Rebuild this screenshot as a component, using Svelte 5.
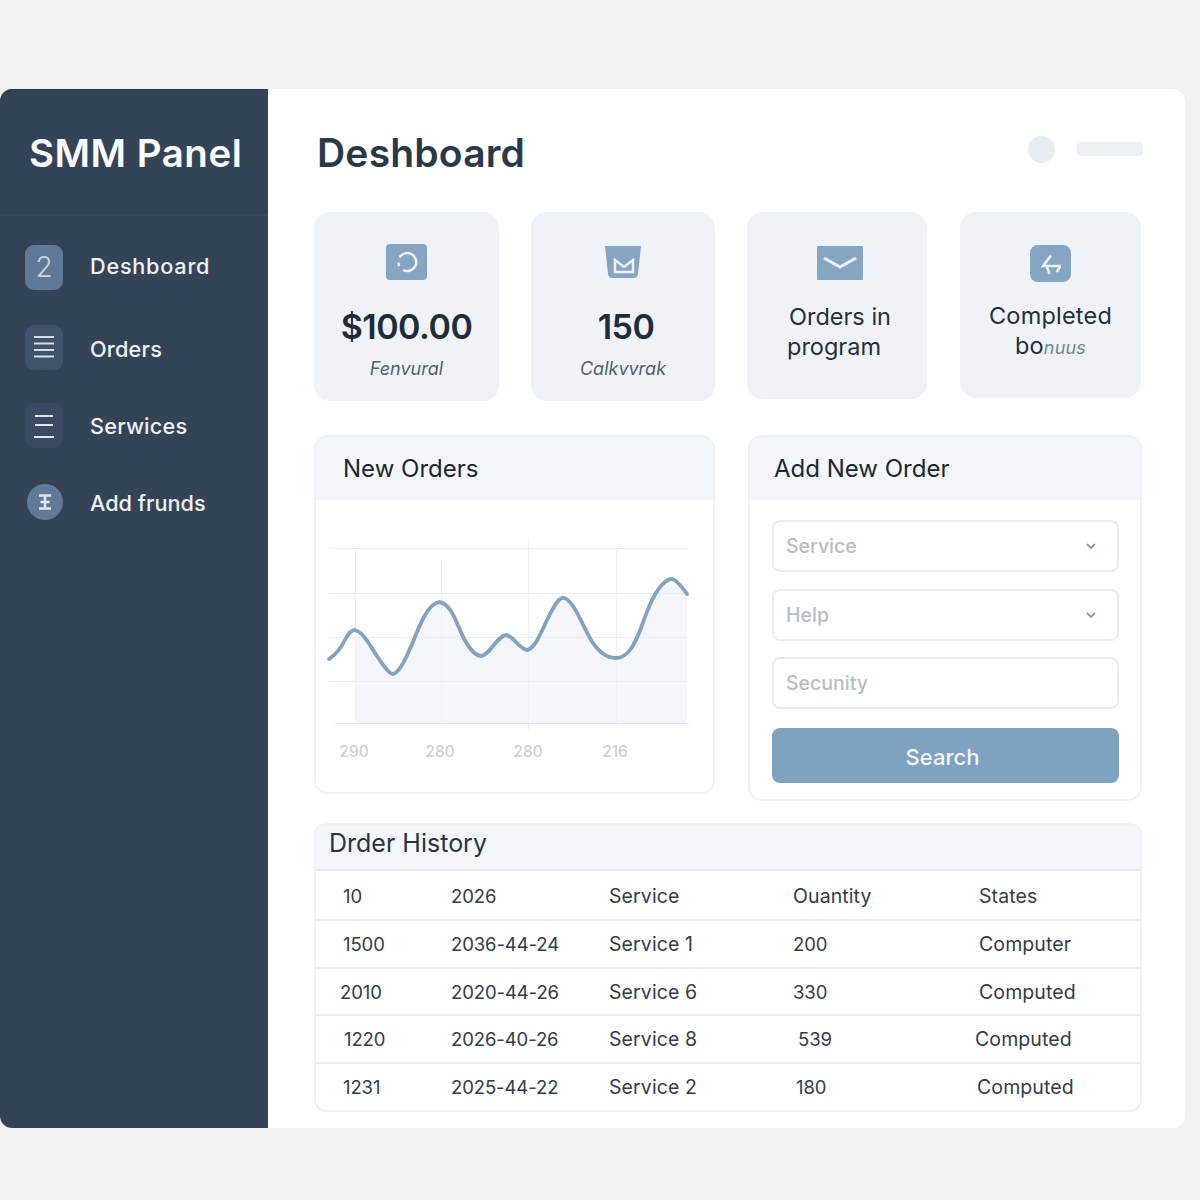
<script>
  const nav = [
    { label: 'Deshboard', kind: 'num' },
    { label: 'Orders', kind: 'list' },
    { label: 'Serwices', kind: 'lines' },
    { label: 'Add frunds', kind: 'fund' }
  ];
  const rows = [
    ['10', '2026', 'Service', 'Ouantity', 'States'],
    ['1500', '2036-44-24', 'Service 1', '200', 'Computer'],
    ['2010', '2020-44-26', 'Service 6', '330', 'Computed'],
    ['1220', '2026-40-26', 'Service 8', '539', 'Computed'],
    ['1231', '2025-44-22', 'Service 2', '180', 'Computed']
  ];
  const shifts = { '2-0': 'back3', '3-0': 'fwd1', '3-3': 'fwd5', '3-4': 'back4', '4-3': 'fwd3', '4-4': 'back2' };
  const cellClass = (text, i, j) => {
    const numeric = /^[\d-]+$/.test(text) ? 'num' : '';
    return `${numeric} ${shifts[`${i}-${j}`] ?? ''}`;
  };
  const line = 'M328 659 C334 655 339 650 344 640 C348 632 351 630 354 630 C362 632 368 644 376 656 C382 665 388 674 392 674 C399 672 405 658 412 642 C419 624 427 604 438 602 C448 603 453 616 459 630 C465 644 473 656 480 656 C489 655 496 636 505 635 C513 636 518 649 526 650 C534 649 540 632 547 618 C553 606 558 597 563 598 C572 600 580 622 590 640 C598 653 606 658 615 658 C627 658 634 644 640 628 C647 608 654 590 664 582 C669 578 672 578 675 581 C679 585 683 589 686 594';
  const ticks = [
    { x: 353, t: '290' },
    { x: 439, t: '280' },
    { x: 527, t: '280' },
    { x: 614, t: '216' }
  ];
</script>

<div class="app">
  <aside class="side">
    <div class="brand">SMM Panel</div>
    <nav class="nav">
      {#each nav as item}
        <div class="item">
          {#if item.kind === 'num'}
            <span class="ic ic-num">2</span>
          {:else if item.kind === 'list'}
            <span class="ic ic-dark">
              <svg width="22" height="26" viewBox="0 0 22 26"><path d="M1 3H21M1 9.500H21M1 16H21M1 22.500H21" stroke="#d5dde6" stroke-width="2" fill="none"/></svg>
            </span>
          {:else if item.kind === 'lines'}
            <span class="ic ic-darker">
              <svg width="24" height="32" viewBox="0 0 24 32"><path d="M3 7H21M3 16H21M2 28H22" stroke="#dfe5ec" stroke-width="2" fill="none"/></svg>
            </span>
          {:else}
            <span class="ic ic-round">
              <svg width="14" height="18" viewBox="0 0 14 18"><path d="M1 2.500H13M2.500 9H11.500M1 15.500H13M7 2.500V15.500" stroke="#dfe6ee" stroke-width="2.500" fill="none"/></svg>
            </span>
          {/if}
          <span class="label">{item.label}</span>
        </div>
      {/each}
    </nav>
  </aside>

  <main class="main">
    <header class="head">
      <h1>Deshboard</h1>
      <div class="user"><span class="avatar"></span><span class="uname"></span></div>
    </header>

    <section class="cards">
      <div class="card">
        <span class="cicon square">
          <svg width="28" height="28" viewBox="0 0 28 28"><path d="M6.500 9.500A9 9 0 1 1 10 22M5.200 14.500L6.200 18" stroke="#eef3f7" stroke-width="2.500" fill="none"/></svg>
        </span>
        <div class="val">$100.00</div>
        <div class="sub">Fenvural</div>
      </div>
      <div class="card">
        <span class="cicon">
          <svg width="38" height="34" viewBox="0 0 38 34"><path d="M1 1H37L34 29Q33.500 33 30 33H8Q4.500 33 4 29Z" fill="#86a5c2"/><path d="M11 27V15L20 22L29 15V27Z" fill="none" stroke="#eef3f7" stroke-width="2.500"/></svg>
        </span>
        <div class="val shifted">150</div>
        <div class="sub">Calkvvrak</div>
      </div>
      <div class="card short">
        <span class="cicon env">
          <svg width="46" height="34" viewBox="0 0 46 34"><rect width="46" height="34" rx="1" fill="#86a5c2"/><path d="M7 12L23 21L39 12" fill="none" stroke="#eef3f7" stroke-width="3"/></svg>
        </span>
        <div class="txt left">Orders in<br /><span class="prog">program</span></div>
      </div>
      <div class="card shorter">
        <span class="cicon rounded">
          <svg width="30" height="30" viewBox="0 0 30 30"><path d="M15 6.500L7 17H25M11 18L13.500 25M24 18L20.500 23" fill="none" stroke="#eef3f7" stroke-width="2.500"/></svg>
        </span>
        <div class="txt wide">Completed<br />bo<span class="faded">nuus</span></div>
      </div>
    </section>

    <section class="mid">
      <div class="panel chart-panel">
        <div class="ptitle">New Orders</div>
        <svg class="chart" width="400" height="294" viewBox="315 500 400 294">
          <path d="{line} V723 H354 V630" fill="#f3f6fa" stroke="none"/>
          <g stroke="#e9edf1" stroke-width="1.200">
            <path d="M328 548.500H688M328 593.500H688M328 637.500H688M328 681.500H688"/>
          </g>
          <path d="M334 723.500H688" stroke="#e2e6ea" stroke-width="1.200"/>
          <g stroke="#eef1f4" stroke-width="1">
            <path d="M354.500 550V725M440.500 560V725M527.500 540V730M615.500 550V725"/>
          </g>
          <path d={line} fill="none" stroke="#84a2bd" stroke-width="3.800" stroke-linecap="round" stroke-linejoin="round"/>
          {#each ticks as t}
            <text x={t.x} y="757" class="tick" text-anchor="middle">{t.t}</text>
          {/each}
        </svg>
      </div>

      <div class="panel form-panel">
        <div class="ptitle pt2">Add New Order</div>
        <div class="form">
          <div class="field"><span>Service</span><svg width="12" height="8" viewBox="0 0 12 8"><path d="M2 2L6 6L10 2" fill="none" stroke="#8e98a5" stroke-width="1.800"/></svg></div>
          <div class="field"><span>Help</span><svg width="12" height="8" viewBox="0 0 12 8"><path d="M2 2L6 6L10 2" fill="none" stroke="#8e98a5" stroke-width="1.800"/></svg></div>
          <div class="field"><span>Secunity</span></div>
          <button class="btn" type="button">Search</button>
        </div>
      </div>
    </section>

    <section class="panel history">
      <div class="htitle">Drder History</div>
      <div class="table">
        {#each rows as r, i}
          <div class="row">
            {#each r as c, j}
              <span class={cellClass(c, i, j)}>{c}</span>
            {/each}
          </div>
        {/each}
      </div>
    </section>
  </main>
</div>

<style>
  :global(body) {
    margin: 0;
    background: #f1f1f2;
    font-family: Inter, "Liberation Sans", sans-serif;
  }
  .app {
    display: flex;
    width: 1185px;
    height: 1039px;
    margin-top: 89px;
    background: #fff;
    border-radius: 12px;
    overflow: hidden;
  }
  .side {
    width: 268px;
    flex: none;
    background: #354357;
    border-top: 1px solid #2c394b;
    box-sizing: border-box;
    color: #fff;
  }
  .brand {
    height: 126px;
    box-sizing: border-box;
    padding: 40px 0 0 29px;
    font-size: 38.500px;
    line-height: 46px;
    font-weight: 600;
    letter-spacing: 0.5px;
    color: #fbfcfd;
    border-bottom: 2px solid #3b495e;
  }
  .nav {
    display: flex;
    flex-direction: column;
    padding: 28px 0 0 25px;
  }
  .item {
    display: flex;
    align-items: center;
    height: 46px;
  }
  .item:nth-child(1) { margin-bottom: 34px; }
  .item:nth-child(2) { margin-bottom: 32px; }
  .item:nth-child(3) { margin-bottom: 31px; }
  .item:nth-child(1) .label { margin-bottom: 2px; letter-spacing: 0.75px; }
  .item:nth-child(2) .label { padding-top: 4px; }
  .item:nth-child(3) .label { padding-top: 2px; }
  .item:nth-child(4) .label { padding-top: 2px; letter-spacing: 0; }
  .label {
    margin-left: 27px;
    font-size: 21.700px;
    font-weight: 500;
    color: #eef2f6;
    letter-spacing: 0.2px;
  }
  .ic {
    width: 38px;
    height: 45px;
    flex: none;
    display: flex;
    align-items: center;
    justify-content: center;
    border-radius: 9px;
  }
  .ic-num {
    background: #5f7a99;
    color: #c9d7e5;
    font-size: 28px;
    font-weight: 300;
  }
  .ic-dark { background: #41526b; }
  .ic-darker { background: #3b4a61; }
  .ic-round {
    width: 36px;
    height: 36px;
    margin-left: 2px;
    margin-right: 0;
    border-radius: 50%;
    background: #607a98;
  }
  .main {
    flex: 1;
    min-width: 0;
    padding: 0 43px 0 46px;
  }
  .head {
    height: 123px;
    display: flex;
    align-items: flex-start;
    justify-content: space-between;
  }
  h1 {
    margin: 39px 0 0 3px;
    font-size: 39px;
    line-height: 50px;
    font-weight: 600;
    letter-spacing: 0.2px;
    color: #2a3848;
  }
  .user {
    display: flex;
    align-items: center;
    gap: 22px;
    margin: 47px -1px 0 0;
  }
  .avatar {
    width: 27px;
    height: 27px;
    border-radius: 50%;
    background: #e7ecf2;
  }
  .uname {
    width: 66px;
    height: 14px;
    margin-top: -2px;
    border-radius: 4px;
    background: #eef1f4;
  }
  .cards {
    display: grid;
    grid-template-columns: 185px 184px 180px 182px;
    column-gap: 32px;
    align-items: start;
  }
  .card {
    height: 189px;
    background: #eff3f8;
    border-radius: 16px;
    display: flex;
    flex-direction: column;
    align-items: center;
  }
  .short { height: 187px; }
  .shorter { height: 186px; margin-left: 1px; }
  .cicon {
    height: 36px;
    margin-top: 32px;
    display: flex;
    align-items: center;
    justify-content: center;
  }
  .env { margin: 33px 0 0 5px; }
  .square, .rounded {
    width: 41px;
    background: #86a5c2;
    border-radius: 4px;
  }
  .rounded { border-radius: 8px; height: 37px; margin-top: 33px; }
  .val {
    margin-top: 25px;
    font-size: 34px;
    line-height: 44px;
    font-weight: 600;
    color: #202c3a;
    letter-spacing: -0.5px;
  }
  .shifted { padding-left: 6px; }
  .sub {
    margin-top: 8px;
    font-size: 18px;
    line-height: 24px;
    font-style: italic;
    color: #4f5f72;
  }
  .txt {
    margin-top: 21px;
    font-size: 23.500px;
    line-height: 30px;
    color: #252f3b;
    text-align: center;
  }
  .rounded + .txt { margin-top: 19px; }
  .wide { letter-spacing: 0.2px; }
  .left {
    align-self: flex-start;
    margin-left: 42px;
    text-align: left;
  }
  .prog { margin-left: -2px; }
  .faded {
    font-size: 18px;
    font-style: italic;
    color: #78838f;
  }
  .mid {
    display: grid;
    grid-template-columns: 401px 394px;
    column-gap: 33px;
    margin-top: 34px;
    align-items: start;
  }
  .panel {
    border: 2px solid #eff1f3;
    border-radius: 14px;
    overflow: hidden;
    box-sizing: border-box;
  }
  .chart-panel { height: 359px; }
  .form-panel { height: 366px; }
  .ptitle {
    height: 63px;
    box-sizing: border-box;
    padding: 17px 0 0 27px;
    background: #f3f6fa;
    font-size: 24px;
    line-height: 30px;
    color: #1d2733;
  }
  .pt2 { padding-left: 24px; }
  .chart { display: block; }
  .tick {
    font-size: 15.500px;
    fill: #cbd0d5;
    font-weight: 500;
  }
  .form {
    display: flex;
    flex-direction: column;
    padding: 20px 21px 0 22px;
  }
  .field {
    height: 52px;
    box-sizing: border-box;
    margin-bottom: 16.500px;
    padding: 0 20px 0 12px;
    border: 2px solid #e9ecef;
    border-radius: 8px;
    display: flex;
    align-items: center;
    justify-content: space-between;
    font-size: 19.500px;
    font-weight: 500;
    color: #b7bdc7;
  }
  .btn {
    height: 55px;
    margin-top: 2px;
    padding: 3px 6px 0 0;
    border: 0;
    border-radius: 8px;
    background: #7fa2c1;
    color: #f3f7fb;
    font: 500 22px Inter, "Liberation Sans", sans-serif;
  }
  .history {
    margin-top: 22px;
    height: 289px;
    border-radius: 12px;
  }
  .htitle {
    height: 46px;
    box-sizing: border-box;
    padding: 1px 0 0 13px;
    background: #f3f6fa;
    border-bottom: 2px solid #e8ebee;
    font-size: 25px;
    line-height: 34px;
    color: #2a3441;
  }
  .row {
    display: grid;
    grid-template-columns: 108px 158px 184px 186px 1fr;
    height: 47.500px;
    box-sizing: border-box;
    padding: 1px 0 0 27px;
    align-items: center;
    border-bottom: 2px solid #e9ecef;
    font-size: 19.500px;
    letter-spacing: 0.1px;
    color: #323c49;
  }
  .row:first-child { height: 50px; padding-top: 2px; }
  .row:last-child { border-bottom: 0; padding-top: 0; }
  .num { font-size: 18.500px; letter-spacing: -0.1px; }
  .back2 { margin-left: -2px; }
  .back3 { margin-left: -3px; }
  .back4 { margin-left: -4px; }
  .fwd1 { margin-left: 1px; }
  .fwd3 { margin-left: 3px; }
  .fwd5 { margin-left: 5px; }
</style>
